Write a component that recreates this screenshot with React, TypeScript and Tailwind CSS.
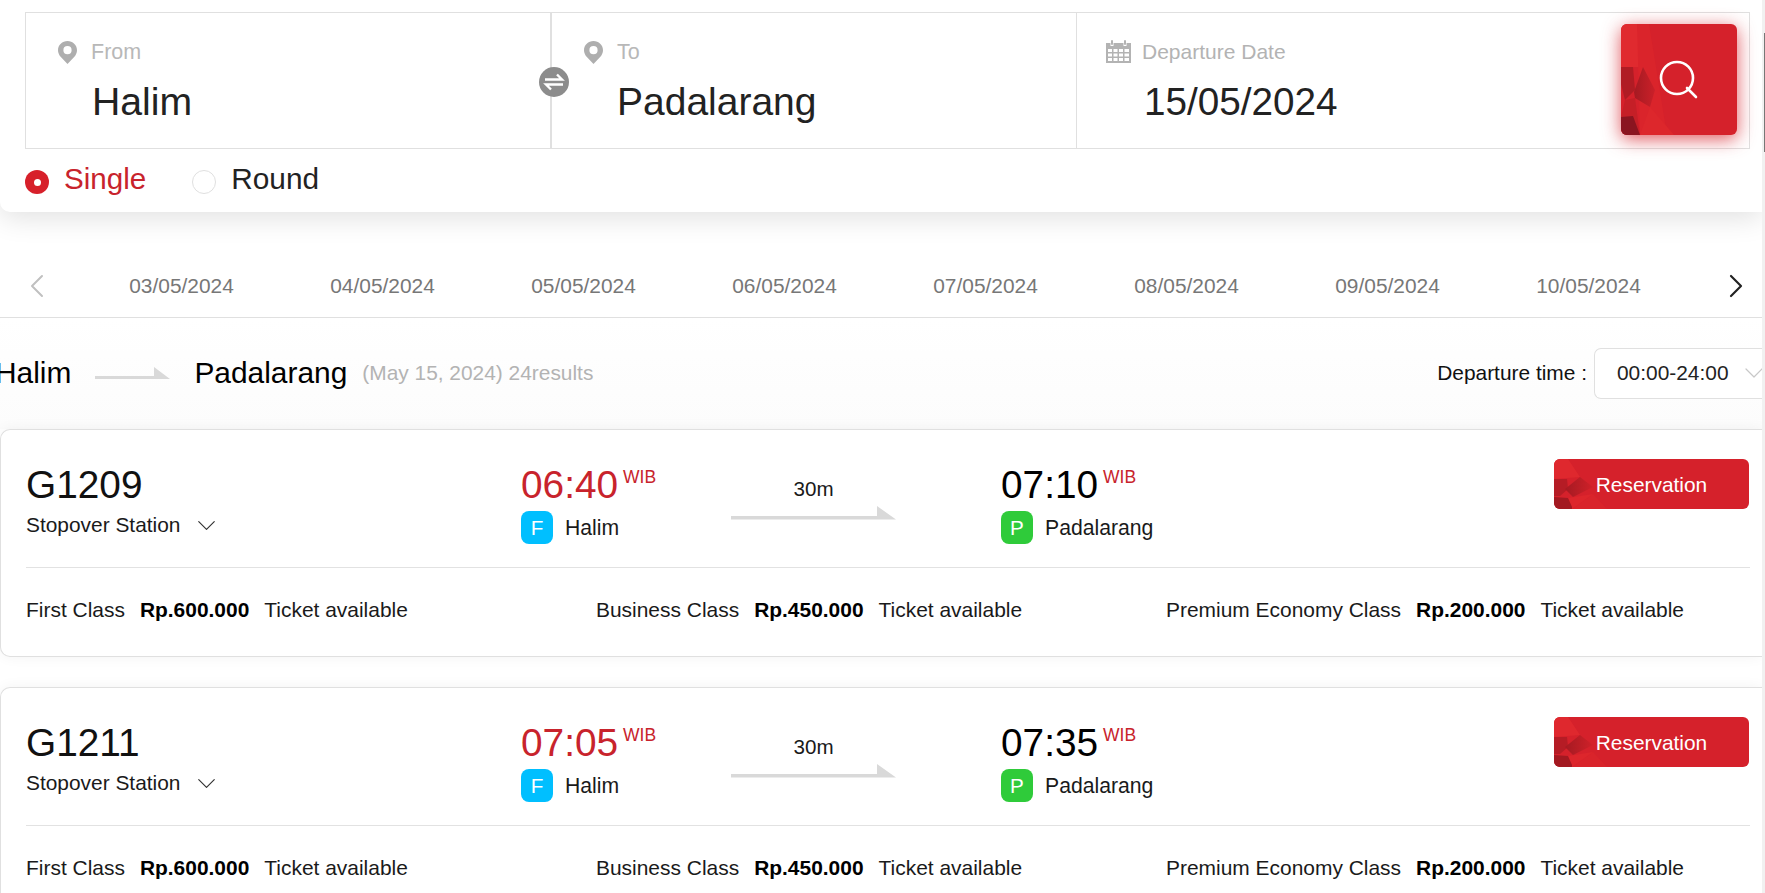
import { ChevronDown, ChevronLeft, ChevronRight } from "lucide-react";

const dates = [
  "03/05/2024",
  "04/05/2024",
  "05/05/2024",
  "06/05/2024",
  "07/05/2024",
  "08/05/2024",
  "09/05/2024",
  "10/05/2024",
];

const trains = [
  { code: "G1209", depart: "06:40", arrive: "07:10" },
  { code: "G1211", depart: "07:05", arrive: "07:35" },
];

const classes = [
  { name: "First Class", price: "Rp.600.000" },
  { name: "Business Class", price: "Rp.450.000" },
  { name: "Premium Economy Class", price: "Rp.200.000" },
];

function Pin() {
  return (
    <svg width="19" height="23" viewBox="0 0 19 23" className="shrink-0">
      <path
        fillRule="evenodd"
        fill="#aeaeae"
        d="M9.5 0C4.3 0 0 4.1 0 9.2c0 2.4 1 4.4 2.4 6.4L9.5 23l7.1-7.4C18 13.6 19 11.6 19 9.2 19 4.1 14.7 0 9.5 0Zm0 5.1a4.1 4.1 0 1 1 0 8.2 4.1 4.1 0 0 1 0-8.2Z"
      />
    </svg>
  );
}

function CalendarIcon() {
  return (
    <svg width="25" height="23" viewBox="0 0 25 23" className="shrink-0">
      <path
        fillRule="evenodd"
        fill="#b3b3b3"
        d="M0 3h4.5v3h3V3h10v3h3V3H25v20H0V3Zm2 6v3h4V9H2Zm5.5 0v3h4V9h-4Zm5.5 0v3h4V9h-4Zm5.5 0v3H23V9h-4.5ZM2 13.5v3h4v-3H2Zm5.5 0v3h4v-3h-4Zm5.5 0v3h4v-3h-4Zm5.5 0v3H23v-3h-4.5ZM2 18v3h4v-3H2Zm5.5 0v3h4v-3h-4Zm5.5 0v3h4v-3h-4Zm5.5 0v3H23v-3h-4.5Z"
      />
      <rect x="5" y="0" width="2" height="5" rx="1" fill="#b3b3b3" />
      <rect x="18" y="0" width="2" height="5" rx="1" fill="#b3b3b3" />
    </svg>
  );
}

function SwapIcon() {
  return (
    <svg width="30" height="30" viewBox="0 0 30 30">
      <circle cx="15" cy="15" r="15" fill="#8c8c8c" />
      <path d="M6 12.5h17l-5-5" fill="none" stroke="#fff" strokeWidth="2.4" />
      <path d="M24 17.5H7l5 5" fill="none" stroke="#fff" strokeWidth="2.4" />
    </svg>
  );
}

function SearchDecor() {
  return (
    <svg
      viewBox="0 0 116 111"
      className="absolute inset-0 h-full w-full"
      preserveAspectRatio="none"
    >
      <defs>
        <linearGradient id="searchKite" x1="0" y1="0" x2="1" y2="0">
          <stop offset="0" stopColor="#a51a22" />
          <stop offset="1" stopColor="#cb2029" />
        </linearGradient>
      </defs>
      <path d="M0 0h16l6 43H0Z" fill="#e02a2f" />
      <path d="M16 0h12l18 111H19Z" fill="#da242b" />
      <path d="M0 43h12l2 23-10 10-4-16Z" fill="#b01c24" />
      <path d="M22 43l12 23-5 17-15-9-1-6Z" fill="url(#searchKite)" />
      <path d="M4 76l10-2 5 37H0V93Z" fill="#c51f27" />
      <path d="M0 93l12-1 7 19H0Z" fill="#8a1520" />
      <path d="M19 111l10-28 24 28Z" fill="#dd272c" />
    </svg>
  );
}

function ButtonDecor() {
  return (
    <svg
      viewBox="0 0 195 50"
      className="absolute inset-0 h-full w-full"
      preserveAspectRatio="none"
    >
      <defs>
        <linearGradient id="buttonKite" x1="0" y1="0" x2="1" y2="0">
          <stop offset="0" stopColor="#a51a22" />
          <stop offset="1" stopColor="#cf2129" />
        </linearGradient>
      </defs>
      <path d="M0 0h14l12 18L0 20Z" fill="#df282e" />
      <path d="M18 50l21-15 14 15Z" fill="#d9242b" />
      <path d="M14 39l25-4-21 15Z" fill="#dd262c" />
      <path d="M0 20h13l1 10-8 7H0Z" fill="#b51c25" />
      <path d="M26 18l13 10-20 10-8-8Z" fill="url(#buttonKite)" />
      <path d="M0 38l14 1 4 9v2H0Z" fill="#a31921" />
    </svg>
  );
}

function TrainArrow() {
  return (
    <svg width="165" height="14" viewBox="0 0 165 14" className="mt-[5px] block">
      <path d="M0 10h146V0l19 13.5H0Z" fill="#d9d9d9" />
    </svg>
  );
}

function Station({ time, letter, name, badge, timeColor }: { time: string; letter: string; name: string; badge: string; timeColor: string }) {
  return (
    <div className="w-[230px] shrink-0">
      <div className="flex items-start">
        <span className={`text-[38.8px] leading-[46px] ${timeColor}`}>{time}</span>
        <span className="mt-[5px] ml-[5px] text-[17.5px] leading-[20px] text-[#c8232c]">WIB</span>
      </div>
      <div className="mt-[3px] flex items-center gap-[12px]">
        <span className={`flex h-[33px] w-[32px] items-center justify-center rounded-[8px] text-[20.7px] text-white ${badge}`}>
          {letter}
        </span>
        <span className="text-[21.2px] leading-[24px] text-[#1a1a1a]">{name}</span>
      </div>
    </div>
  );
}

function TrainCard({ code, depart, arrive }: { code: string; depart: string; arrive: string }) {
  return (
    <div className="mb-[30px] h-[228px] shrink-0 rounded-l-[10px] border-y border-l border-[#e0e0e0] bg-white pr-[12px] pl-[25px] shadow-[0_0_14px_rgba(0,0,0,0.05)]">
      <div className="flex h-[138px] items-start border-b border-[#e2e2e2] pt-[29px]">
        <div className="mt-[3px] w-[495px] shrink-0">
          <div className="text-[38.8px] leading-[46px] text-[#111]">{code}</div>
          <div className="mt-[5px] flex h-[24px] items-center text-[20.9px] leading-[24px] text-[#1a1a1a]">
            Stopover Station
            <ChevronDown className="ml-[11px] size-[31px] text-[#333]" strokeWidth={0.9} />
          </div>
        </div>
        <div className="mt-[3px]">
          <Station time={depart} letter="F" name="Halim" badge="bg-[#00bfff]" timeColor="text-[#c8232c]" />
        </div>
        <div className="mt-[18px] -ml-[20px] w-[165px] shrink-0 text-center text-[20.6px] leading-[24px] text-[#1a1a1a]">
          30m
          <TrainArrow />
        </div>
        <div className="mt-[3px] ml-[105px]">
          <Station time={arrive} letter="P" name="Padalarang" badge="bg-[#2fcb3a]" timeColor="text-black" />
        </div>
        <button className="relative ml-auto mr-[1px] h-[50px] w-[195px] overflow-hidden rounded-[6px] bg-[#d5212b] pt-[2px] text-[20.9px] text-white">
          <ButtonDecor />
          <span className="relative">Reservation</span>
        </button>
      </div>
      <div className="grid grid-cols-[570px_570px_1fr] pt-[30px] text-[20.95px] leading-[24px] text-[#1a1a1a]">
        {classes.map((item) => (
          <div key={item.name} className="flex gap-[15px] whitespace-nowrap">
            <span>{item.name}</span>
            <span className="font-bold text-black">{item.price}</span>
            <span>Ticket available</span>
          </div>
        ))}
      </div>
    </div>
  );
}

export default function App() {
  return (
    <div className="flex h-[893px] w-[1765px] overflow-hidden bg-white font-['Liberation_Sans',Arial,sans-serif]">
      <div className="flex w-[1762px] shrink-0 flex-col overflow-hidden">
        <div className="relative z-10 h-[212px] shrink-0 rounded-bl-[10px] bg-white px-[25px] pt-[12px] shadow-[0_6px_28px_rgba(0,0,0,0.12)]">
          <div className="relative flex h-[137px] w-[1725px] border border-[#e0e0e0]">
            <div className="w-[526px] border-r-2 border-[#e0e0e0] pt-[27px] pl-[32px]">
              <div className="flex items-center gap-[14px]">
                <Pin />
                <span className="mt-[1px] text-[21.5px] leading-[23px] text-[#b8b8b8]">From</span>
              </div>
              <div className="mt-[15px] pl-[34px] text-[39.2px] leading-[46px] text-[#222]">Halim</div>
            </div>
            <div className="w-[525px] border-r border-[#e0e0e0] pt-[27px] pl-[32px]">
              <div className="flex items-center gap-[14px]">
                <Pin />
                <span className="mt-[1px] text-[21.5px] leading-[23px] text-[#b8b8b8]">To</span>
              </div>
              <div className="mt-[15px] pl-[33px] text-[39px] leading-[46px] text-[#222]">Padalarang</div>
            </div>
            <div className="flex flex-1 justify-between pt-[27px] pr-[12px] pl-[29px]">
              <div>
                <div className="flex items-center gap-[11px]">
                  <CalendarIcon />
                  <span className="text-[21px] leading-[23px] text-[#b3b3b3]">Departure Date</span>
                </div>
                <div className="mt-[16px] pl-[38px] text-[38.7px] leading-[46px] text-[#222]">15/05/2024</div>
              </div>
              <button className="relative -mt-[16px] flex h-[111px] w-[116px] items-center justify-center rounded-[6px] bg-[#d5212b] shadow-[0_4px_18px_rgba(213,33,43,0.75)]">
                <span className="absolute inset-0 overflow-hidden rounded-[6px]">
                  <SearchDecor />
                </span>
                <svg width="42" height="42" viewBox="0 0 42 42" className="relative">
                  <circle cx="19" cy="19" r="16" fill="none" stroke="#fff" strokeWidth="2.6" />
                  <path d="M29 29l9 9" fill="none" stroke="#fff" strokeWidth="2.6" strokeLinecap="round" />
                </svg>
              </button>
            </div>
            <div className="absolute top-[54px] left-[513px]">
              <SwapIcon />
            </div>
          </div>
          <div className="mt-[12px] flex items-start">
            <span className="mt-[9px] flex size-[24px] items-center justify-center rounded-full bg-[#d7202a]">
              <span className="size-[7px] rounded-full bg-white" />
            </span>
            <span className="ml-[15px] text-[29.6px] leading-[36px] text-[#c8232c]">Single</span>
            <span className="mt-[9px] ml-[46px] size-[24px] rounded-full border border-[#e0e0e0] bg-white" />
            <span className="ml-[15px] text-[29.8px] leading-[36px] text-[#222]">Round</span>
          </div>
        </div>

        <div className="flex h-[106px] shrink-0 items-start border-b border-[#e0e0e0] pt-[62px]">
          <div className="flex h-[24px] w-full items-center">
            <ChevronLeft className="ml-[17px] size-[40px] shrink-0 text-[#c0c0c0]" strokeWidth={1.2} />
            <div className="ml-[24px] flex">
              {dates.map((date) => (
                <span key={date} className="w-[201px] text-center text-[20.9px] leading-[24px] text-[#777]">
                  {date}
                </span>
              ))}
            </div>
            <ChevronRight className="ml-auto mr-[6px] size-[40px] shrink-0 text-[#222]" strokeWidth={1.3} />
          </div>
        </div>

        <div className="flex h-[111px] shrink-0 items-center pb-[1px] -ml-[5px] bg-gradient-to-b from-white to-[#fcfcfc]">
          <span className="text-[29.9px] leading-[36px] text-black">Halim</span>
          <svg width="75" height="13" viewBox="0 0 75 13" className="ml-[24px] shrink-0">
            <path d="M0 9h59V0l16 12H0Z" fill="#d9d9d9" />
          </svg>
          <span className="ml-[24px] text-[29.9px] leading-[36px] text-black">Padalarang</span>
          <span className="ml-[15px] text-[20.9px] text-[#b3b3b3]">(May 15, 2024) 24results</span>
          <span className="ml-auto text-[20.9px] text-[#111]">Departure time :</span>
          <div className="ml-[7px] flex h-[51px] w-[168px] shrink-0 items-center rounded-l-[7px] border-y border-l border-[#e0e0e0] bg-white pl-[22px] text-[20.9px] whitespace-nowrap text-[#222]">
            00:00-24:00
            <ChevronDown className="ml-[9px] size-[32px] shrink-0 text-[#c8c8c8]" strokeWidth={0.9} />
          </div>
        </div>

        {trains.map((train) => (
          <TrainCard key={train.code} {...train} />
        ))}
      </div>
      <div className="relative w-[3px] shrink-0 bg-[#f1f1f1]">
        <div className="absolute top-[33px] left-[2px] h-[119px] w-px bg-[#777]" />
      </div>
    </div>
  );
}
